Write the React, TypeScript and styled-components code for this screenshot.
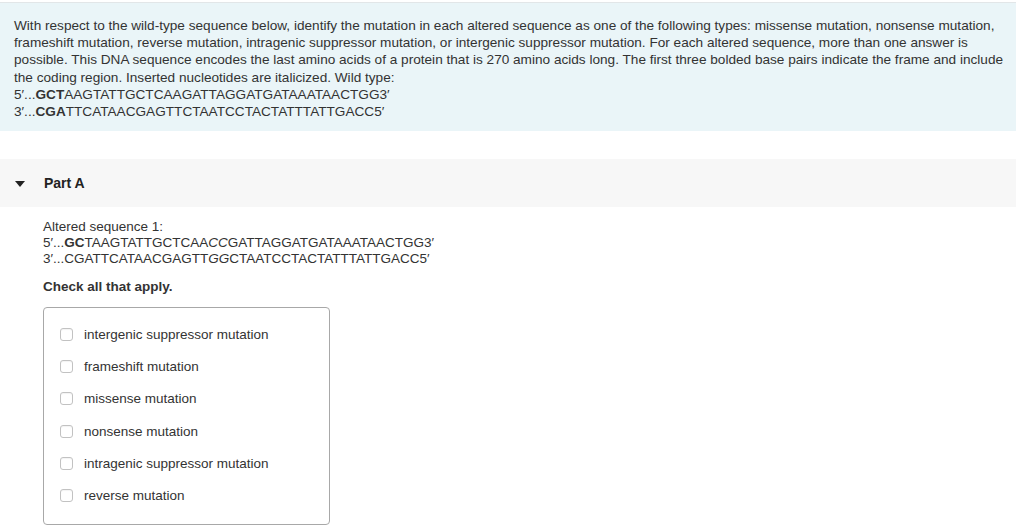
import React, { useState } from 'react';
import styled, { createGlobalStyle } from 'styled-components';

const GlobalStyle = createGlobalStyle`
  body {
    margin: 0;
    background: #fff;
    font-family: "Liberation Sans", Arial, Helvetica, sans-serif;
    color: #333;
  }
`;

const Page = styled.div`
  width: 1016px;
  padding-top: 2px;
`;

const IntroPanel = styled.div`
  background: #eaf5f8;
  border-top: 1px solid #e2e6e8;
  padding: 14px 14px 13px 14px;
  font-size: 13.62px;
  line-height: 17.2px;
  height: 101px;
  white-space: nowrap;
`;

const PartHeader = styled.div`
  margin-top: 28px;
  height: 48px;
  background: #f7f7f7;
  display: flex;
  align-items: center;
  gap: 19px;
  padding-left: 15px;
`;

const Caret = styled.span`
  width: 0;
  height: 0;
  border-left: 5px solid transparent;
  border-right: 5px solid transparent;
  border-top: 6px solid #222;
  margin-top: 1px;
`;

const PartTitle = styled.span`
  font-size: 14px;
  font-weight: bold;
  color: #222;
`;

const PartBody = styled.div`
  padding: 12px 0 0 43px;
  font-size: 13.5px;
`;

const Sequence = styled.div`
  line-height: 16px;
  white-space: nowrap;
`;

const Instruction = styled.div`
  margin-top: 12px;
  font-weight: bold;
  line-height: 16px;
`;

const AnswerBox = styled.div`
  margin-top: 12px;
  width: 287px;
  height: 218px;
  border: 1px solid #a8a8a8;
  border-radius: 4px;
  box-sizing: border-box;
  padding: 18px 0 0 16px;
  display: flex;
  flex-direction: column;
  gap: 16.4px;
`;

const Option = styled.label`
  display: flex;
  align-items: center;
  gap: 11px;
  height: 16px;
  font-size: 13.5px;
  color: #333;
  cursor: pointer;
`;

const Box = styled.span<{ $checked: boolean }>`
  width: 13px;
  height: 13px;
  box-sizing: border-box;
  border: 1px solid #c2c2c2;
  border-radius: 3px;
  background: ${p => (p.$checked ? '#4a90d9' : '#fff')};
  box-shadow: inset 0 1px 1px rgba(0, 0, 0, 0.05);
`;

const options = [
  'intergenic suppressor mutation',
  'frameshift mutation',
  'missense mutation',
  'nonsense mutation',
  'intragenic suppressor mutation',
  'reverse mutation',
];

export default function App() {
  const [checked, setChecked] = useState<boolean[]>(options.map(() => false));

  const toggle = (i: number) => {
    setChecked(checked.map((c, j) => (j === i ? !c : c)));
  };

  return (
    <Page>
      <GlobalStyle />
      <IntroPanel>
        With respect to the wild-type sequence below, identify the mutation in each altered sequence as one of the following types: missense mutation, nonsense mutation,
        <br />
        frameshift mutation, reverse mutation, intragenic suppressor mutation, or intergenic suppressor mutation. For each altered sequence, more than one answer is
        <br />
        possible. This DNA sequence encodes the last amino acids of a protein that is 270 amino acids long. The first three bolded base pairs indicate the frame and include
        <br />
        the coding region. Inserted nucleotides are italicized. Wild type:
        <br />
        5′...<b>GCT</b>AAGTATTGCTCAAGATTAGGATGATAAATAACTGG3′
        <br />
        3′...<b>CGA</b>TTCATAACGAGTTCTAATCCTACTATTTATTGACC5′
      </IntroPanel>

      <PartHeader>
        <Caret />
        <PartTitle>Part A</PartTitle>
      </PartHeader>

      <PartBody>
        <Sequence>
          Altered sequence 1:
          <br />
          5′...<b>GC</b>TAAGTATTGCTCAA<i>CC</i>GATTAGGATGATAAATAACTGG3′
          <br />
          3′...CGATTCATAACGAGTT<i>GG</i>CTAATCCTACTATTTATTGACC5′
        </Sequence>
        <Instruction>Check all that apply.</Instruction>
        <AnswerBox>
          {options.map((o, i) => (
            <Option key={o} onClick={() => toggle(i)}>
              <Box $checked={checked[i]} />
              {o}
            </Option>
          ))}
        </AnswerBox>
      </PartBody>
    </Page>
  );
}
